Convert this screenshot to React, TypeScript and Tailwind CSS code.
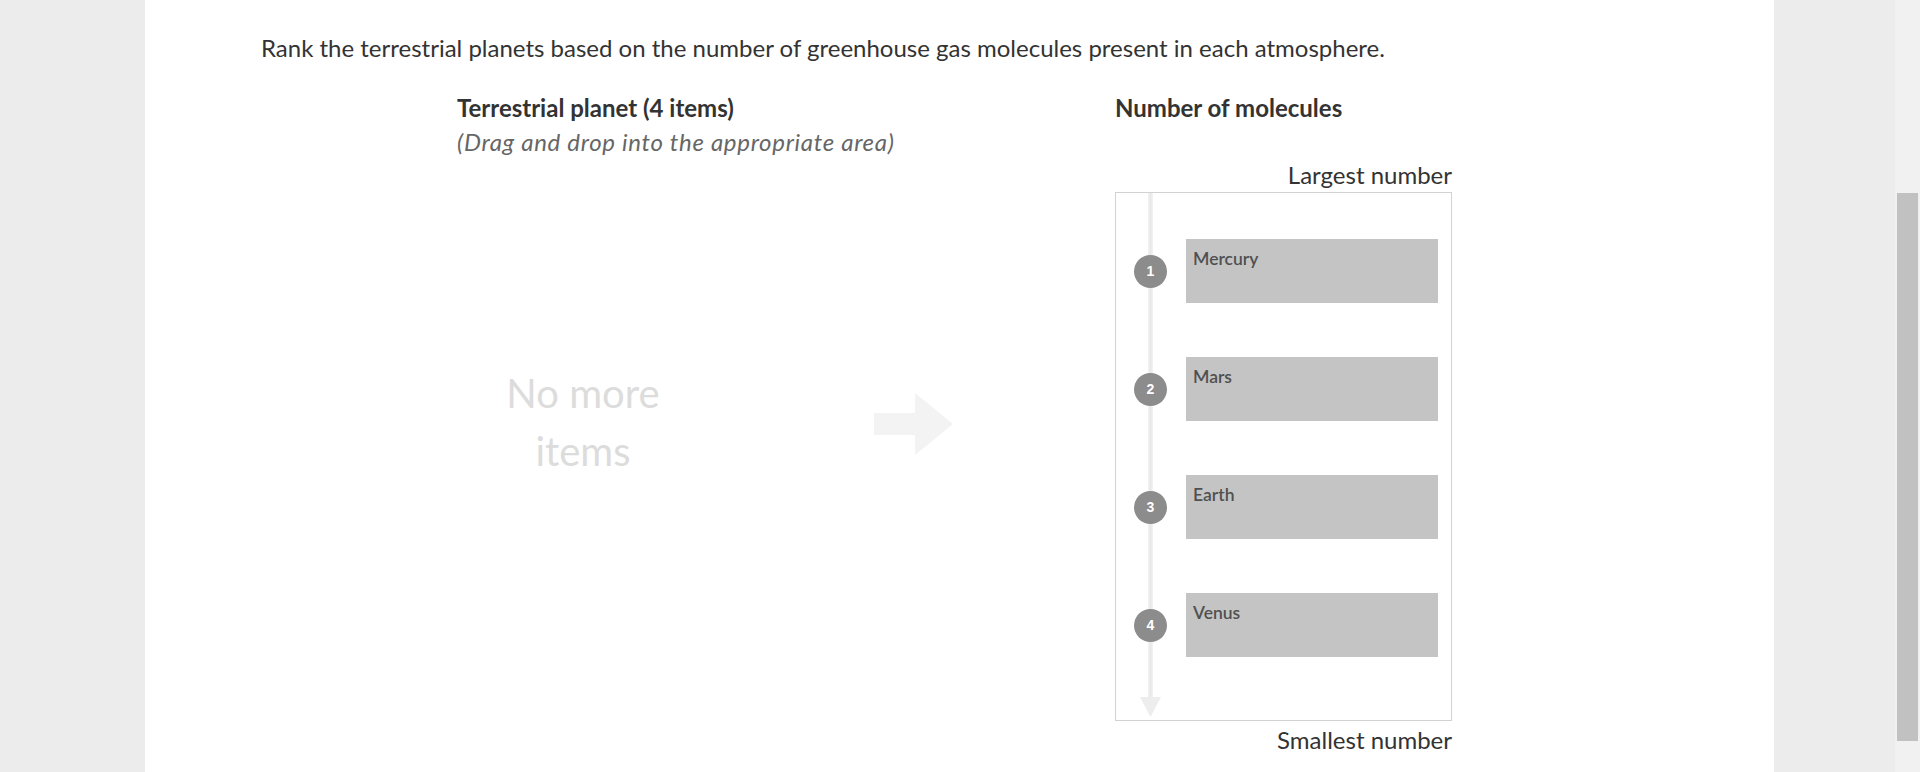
import React from "react";

const planets = ["Mercury", "Mars", "Earth", "Venus"];

function RankItem({ n, label }: { n: number; label: string }) {
  return (
    <div className="flex items-center h-[64px]">
      <div className="w-[70px] flex justify-center pr-[1px]">
        <div className="w-[33px] h-[33px] rounded-full bg-[#8c8c8c] flex items-center justify-center text-white text-[14px] font-bold font-['Liberation_Sans',sans-serif]">
          {n}
        </div>
      </div>
      <div className="w-[252px] h-[64px] bg-[#c4c4c4] px-[7px] pt-[10px] text-[17.5px] leading-[20px] font-semibold text-[#505050]">
        {label}
      </div>
    </div>
  );
}

export default function App() {
  return (
    <div className="flex w-full h-[772px] bg-[#ececec] font-['Lato',sans-serif] overflow-hidden">
      <div className="w-[145px] shrink-0" />
      <div className="w-[1629px] shrink-0 bg-white">
        <p className="pl-[116px] pt-[34px] text-[24px] leading-[28px] text-[#333]">
          Rank the terrestrial planets based on the number of greenhouse gas molecules present in each atmosphere.
        </p>

        <div className="flex pl-[312px] pt-[32px]">
          {/* source column */}
          <div className="w-[417px] shrink-0">
            <h3 className="text-[24px] leading-[28px] font-bold text-[#333]">Terrestrial planet (4 items)</h3>
            <p className="text-[24px] leading-[28px] italic text-[#666] tracking-[0.7px] whitespace-nowrap mt-[6px]">(Drag and drop into the appropriate area)</p>
            <div className="w-[252px] pt-[208px] text-center text-[40px] leading-[58px] text-[#dcdcdc]">
              No more
              <br />
              items
            </div>
          </div>

          {/* arrow */}
          <div className="w-[241px] shrink-0 pt-[299px]">
            <svg width="80" height="62" viewBox="0 0 80 62">
              <path d="M0 20 H41 V0 L79 31 L41 62 V42 H0 Z" fill="#f3f3f3" />
            </svg>
          </div>

          {/* target column */}
          <div className="w-[337px] shrink-0">
            <h3 className="text-[24px] leading-[28px] font-bold text-[#333]">Number of molecules</h3>
            <div className="mt-[41px] text-right text-[24px] leading-[24px] text-[#333]">Largest number</div>
            <div className="relative mt-[5px] h-[529px] border border-[#d2d2d2]">
              <div className="absolute left-[32px] top-0 h-[505px] w-[5px] bg-gradient-to-r from-[#f3f3f3] via-[#e8e8e8] to-[#f3f3f3]" />
              <svg className="absolute left-[24px] top-[504px]" width="21" height="21" viewBox="0 0 21 21">
                <path d="M0 0 H21 L10.5 20 Z" fill="#ededed" />
              </svg>
              <div className="relative flex flex-col gap-[54px] pt-[46px]">
                {planets.map((p, i) => (
                  <RankItem key={p} n={i + 1} label={p} />
                ))}
              </div>
            </div>
            <div className="text-right text-[24px] leading-[24px] text-[#333] mt-[7px]">Smallest number</div>
          </div>
        </div>
      </div>
      <div className="w-[121px] shrink-0" />
      <div className="w-[25px] shrink-0 bg-[#f1f1f1] pt-[193px] px-[2px]">
        <div className="h-[548px] bg-[#c1c1c1]" />
      </div>
    </div>
  );
}
